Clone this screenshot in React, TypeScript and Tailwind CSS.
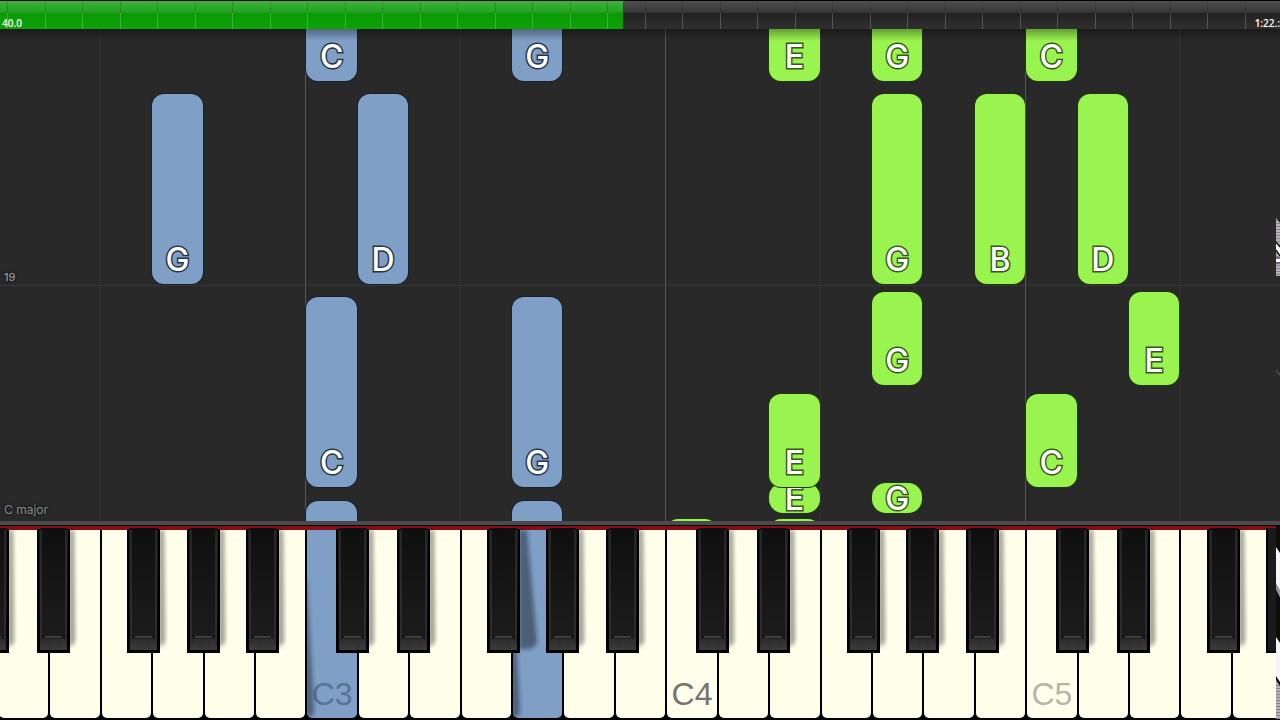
import React from 'react';
import { clsx } from 'clsx';

type Hand = 'left' | 'right';

interface Note {
  lane: number;
  label?: string;
  top: number;
  height: number;
  hand: Hand;
}

interface PianoKey {
  name: string;
  // black key that overlaps the left side of this white key
  sharp?: 'C' | 'D' | 'F' | 'G' | 'A';
  pressed?: boolean;
}

const NOTES: Note[] = [
  { lane: 3, label: 'G', top: 65, height: 190, hand: 'left' },
  { lane: 6, top: 472, height: 60, hand: 'left' },
  { lane: 6, label: 'C', top: 268, height: 190, hand: 'left' },
  { lane: 6, label: 'C', top: -40, height: 92, hand: 'left' },
  { lane: 7, label: 'D', top: 65, height: 190, hand: 'left' },
  { lane: 10, top: 472, height: 60, hand: 'left' },
  { lane: 10, label: 'G', top: 268, height: 190, hand: 'left' },
  { lane: 10, label: 'G', top: -40, height: 92, hand: 'left' },
  { lane: 13, top: 490, height: 60, hand: 'right' },
  { lane: 15, top: 490, height: 60, hand: 'right' },
  { lane: 15, label: 'E', top: 454, height: 30, hand: 'right' },
  { lane: 15, label: 'E', top: 365, height: 93, hand: 'right' },
  { lane: 15, label: 'E', top: -40, height: 92, hand: 'right' },
  { lane: 17, label: 'G', top: 454, height: 30, hand: 'right' },
  { lane: 17, label: 'G', top: 263, height: 93, hand: 'right' },
  { lane: 17, label: 'G', top: 65, height: 190, hand: 'right' },
  { lane: 17, label: 'G', top: -40, height: 92, hand: 'right' },
  { lane: 19, label: 'B', top: 65, height: 190, hand: 'right' },
  { lane: 20, label: 'C', top: 365, height: 93, hand: 'right' },
  { lane: 20, label: 'C', top: -40, height: 92, hand: 'right' },
  { lane: 21, label: 'D', top: 65, height: 190, hand: 'right' },
  { lane: 22, label: 'E', top: 263, height: 93, hand: 'right' },
];

const KEYS: PianoKey[] = [
  { name: 'D2', sharp: 'C' },
  { name: 'E2', sharp: 'D' },
  { name: 'F2' },
  { name: 'G2', sharp: 'F' },
  { name: 'A2', sharp: 'G' },
  { name: 'B2', sharp: 'A' },
  { name: 'C3', pressed: true },
  { name: 'D3', sharp: 'C' },
  { name: 'E3', sharp: 'D' },
  { name: 'F3' },
  { name: 'G3', sharp: 'F', pressed: true },
  { name: 'A3', sharp: 'G' },
  { name: 'B3', sharp: 'A' },
  { name: 'C4' },
  { name: 'D4', sharp: 'C' },
  { name: 'E4', sharp: 'D' },
  { name: 'F4' },
  { name: 'G4', sharp: 'F' },
  { name: 'A4', sharp: 'G' },
  { name: 'B4', sharp: 'A' },
  { name: 'C5' },
  { name: 'D5', sharp: 'C' },
  { name: 'E5', sharp: 'D' },
  { name: 'F5' },
  { name: 'G5', sharp: 'F' },
];

const SHARP_OFFSET = {
  C: '-left-[21px]',
  D: '-left-[11px]',
  F: '-left-[24px]',
  G: '-left-[16px]',
  A: '-left-[8px]',
};

const LABEL_COLOR: Record<string, string> = {
  C3: 'text-[#577495]',
  C4: 'text-[#74746b]',
  C5: 'text-[#b5b5a8]',
};

const ProgressBar = () => (
  <header className="relative h-[29px] shrink-0 overflow-hidden border-t border-black">
    <div className="flex h-full flex-col">
      <div className="h-3 bg-linear-to-b from-[#505050] to-[#363636]" />
      <div className="flex-1 bg-linear-to-b from-[#212121] to-[#303030]" />
    </div>
    <div className="absolute inset-y-0 left-0 flex w-[48.7%] flex-col">
      <div className="h-3 bg-linear-to-b from-[#3cb43a] to-[#1fa01c]" />
      <div className="flex-1 bg-linear-to-b from-[#0a9a05] to-[#0ea208]" />
    </div>
    <div className="absolute inset-y-0 -right-0.5 left-[7px] flex">
      {Array.from({ length: 34 }, (_, i) => (
        <div key={i} className="flex flex-1 flex-col">
          <div className="h-3 w-px bg-black/15" />
          <div className="w-px flex-1 bg-white/20" />
        </div>
      ))}
    </div>
    <div className="absolute inset-x-0 bottom-0 flex justify-between pl-0.5 font-['Open_Sans',sans-serif] text-[10px] leading-3 font-semibold text-white">
      <span>40.0</span>
      <span>1:22.:</span>
    </div>
    <input
      type="range"
      aria-label="Song position"
      min={0}
      max={1000}
      defaultValue={487}
      className="absolute inset-0 h-full w-full cursor-pointer opacity-0"
    />
  </header>
);

const NoteBlock: React.FC<{ note: Note }> = ({ note }) => (
  <div
    style={{ top: note.top, height: note.height }}
    className={clsx(
      'absolute inset-x-0 flex items-end justify-center font-["Inter",sans-serif] text-[32px] leading-7 font-medium text-white [paint-order:stroke_fill]',
      note.height > 40 ? 'rounded-xl pb-2.5' : 'rounded-[14px]',
      note.hand === 'left'
        ? 'bg-[#7f9fc7] shadow-[0_0_0_1px_#16212e] [-webkit-text-stroke:3px_#263344]'
        : 'bg-[#9af44f] shadow-[0_0_0_1px_#20380c] [-webkit-text-stroke:3px_#35591a]',
    )}
  >
    {note.label}
  </div>
);

const NoteRoll = () => (
  <main className="relative flex min-h-[492px] flex-1 overflow-hidden bg-[#292929] font-['Inter',sans-serif]">
    <div className="absolute inset-x-0 top-64 h-px bg-[#363636]" />
    <div className="-mr-0.5 -ml-[3px] flex flex-1">
      {KEYS.map((key, lane) => (
        <div
          key={key.name}
          className={clsx(
            'relative flex-1 border-l',
            key.name.startsWith('C') && 'border-[#555555]',
            key.name.startsWith('F') && 'border-[#343434]',
            !/^[CF]/.test(key.name) && 'border-transparent',
          )}
        >
          {NOTES.filter((n) => n.lane === lane).map((n) => (
            <NoteBlock key={n.top} note={n} />
          ))}
        </div>
      ))}
    </div>
    <div className="absolute inset-x-0 top-0 h-3 bg-linear-to-b from-black/35 to-transparent" />
    <span className="absolute top-60 left-1 text-[11px] leading-4 font-medium text-[#9a9a9a] [text-shadow:0_0_3px_#000]">19</span>
    <span className="absolute bottom-[3px] left-1 text-xs leading-4 text-[#8c8c8c] [text-shadow:0_0_3px_#000]">C major</span>
  </main>
);

const BlackKey: React.FC<{ name: string; sharp: NonNullable<PianoKey['sharp']>; wideShadow?: boolean }> = ({
  name,
  sharp,
  wideShadow,
}) => (
  <button
    type="button"
    aria-label={name}
    className={clsx('absolute -top-0.5 z-10 h-[125px] w-[33px]', SHARP_OFFSET[sharp])}
  >
    <svg viewBox="0 0 33 125" className="block h-full w-full overflow-visible">
      {wideShadow ? (
        <path d="M32 2H40L50 112Q50 121 40 121H32Z" fill="#000" opacity=".4" filter="url(#soft)" />
      ) : (
        <path d="M32 2H37L38 113Q37 117 32 119Z" fill="#000" opacity=".4" filter="url(#soft)" />
      )}
      <path d="M0 1H33V125H0Z" fill="#000" />
      <path d="M2 2L3 122H30L31 2Z" fill="#1e1e1e" />
      <path d="M3 0H30L28 109H5Z" fill="url(#ebony)" />
      <path d="M4 2V120M29 2V120" stroke="#3c3c3c" strokeWidth="1" />
      <path d="M3 122V118Q4 111 8 110H25Q29 111 30 118V122Z" fill="url(#lip)" />
      <path d="M5 107L8 110H25L28 107" fill="none" stroke="#0c0c0c" strokeWidth="1" />
      <path d="M8 109H25" stroke="#626262" strokeWidth="1" />
      <path d="M13 113V122M22 113V122" stroke="#303030" strokeWidth="1" />
    </svg>
  </button>
);

const Keyboard = () => (
  <footer className="shrink-0 overflow-hidden border-t-4 border-[#4b4b4b] bg-black">
    <svg width="0" height="0" className="absolute" aria-hidden="true">
      <defs>
        <linearGradient id="ebony" x1="0" y1="0" x2="0" y2="1">
          <stop offset="0" stopColor="#0f0f0f" />
          <stop offset="1" stopColor="#1c1c1c" />
        </linearGradient>
        <linearGradient id="lip" x1="0" y1="0" x2="0" y2="1">
          <stop offset="0" stopColor="#2c2c2c" />
          <stop offset="1" stopColor="#3b3b3b" />
        </linearGradient>
        <filter id="soft" x="-50%" y="-5%" width="200%" height="110%">
          <feGaussianBlur stdDeviation="2" />
        </filter>
      </defs>
    </svg>
    <div className="mt-px h-1 bg-[#850f15]" />
    <div className="-mr-0.5 -ml-[3px] flex h-[188px]">
      {KEYS.map((key) => (
        <div key={key.name} className="relative flex-1 pl-0.5">
          <button
            type="button"
            aria-label={key.name}
            aria-pressed={!!key.pressed}
            className={clsx(
              'relative flex h-full w-full items-end justify-center overflow-hidden rounded-b-[5px] pb-1.5 font-["Liberation_Sans",Arial,sans-serif] text-[32px] leading-9',
              key.pressed ? 'bg-[#7f9fc7]' : 'bg-[#fffeeb]',
              LABEL_COLOR[key.name],
            )}
          >
            {key.pressed && (
              <svg viewBox="0 0 50 189" preserveAspectRatio="none" className="absolute inset-0 h-full w-full">
                <path d="M-2 50H0L7 180Q7 187 4 188H-2Z" fill="#000" opacity=".4" filter="url(#soft)" />
              </svg>
            )}
            {LABEL_COLOR[key.name] && <span>{key.name}</span>}
          </button>
          {key.sharp && <BlackKey name={`${key.sharp} sharp before ${key.name}`} sharp={key.sharp} wideShadow={key.pressed} />}
        </div>
      ))}
      <div className="relative w-0">
        {/* G sharp at the far right edge */}
        <div className="absolute -top-0.5 -left-[16px] h-[125px] w-[33px] border-x-2 border-b-2 border-black bg-[#1a1a1a]" />
      </div>
    </div>
    <div className="h-0.5 bg-black" />
  </footer>
);

const EdgeArt = () => (
  <svg viewBox="0 0 4 502" className="absolute right-0 bottom-0 z-20 h-[502px] w-1" aria-hidden="true">
    <defs>
      <pattern id="stripes" width="4" height="3" patternUnits="userSpaceOnUse">
        <path d="M0 0H4V3H0Z" fill="#b9b2bb" />
        <path d="M0 2H4V3H0Z" fill="#858189" />
      </pattern>
    </defs>
    <path d="M0 0L4 5V58H0Z" fill="url(#stripes)" />
    <path d="M0 24L4 29V39L0 32Z" fill="#fff" />
    <path d="M0 24L4 29M0 32L4 38" stroke="#111" strokeWidth="1.5" />
    <path d="M0 41H4V44H0Z" fill="#fff" />
    <path d="M0 40H4M0 45H4" stroke="#3a2450" strokeWidth="1" />
    <path d="M0 152L4 157" stroke="#666" strokeWidth="1" />
    <path d="M0 308H4V502H0Z" fill="#0c0c0c" />
    <path d="M0 329L4 335V379L0 371Z" fill="#f4f4fb" />
    <path d="M0 365L4 372V379L0 371Z" fill="#8e93a0" />
    <path d="M0 419L4 425V464L0 458Z" fill="#f4f4fb" />
    <path d="M0 462L4 468V501H0Z" fill="url(#stripes)" />
  </svg>
);

export default function App() {
  return (
    <div className="relative flex min-h-screen flex-col overflow-hidden bg-black">
      <ProgressBar />
      <NoteRoll />
      <Keyboard />
      <EdgeArt />
    </div>
  );
}
